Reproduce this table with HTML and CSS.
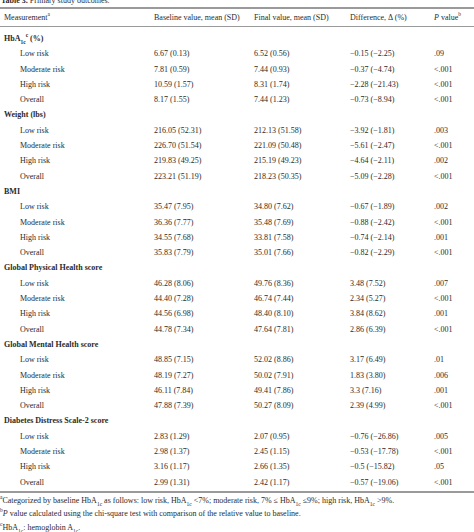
FILE: index.html
```html
<!DOCTYPE html>
<html>
<head>
<meta charset="utf-8">
<link rel="stylesheet" href="styles.css">
</head>
<body>
<div class="caption"><b>Table 3.</b> Primary study outcomes.</div>
<table class="tbl">
<colgroup><col class="c1"><col class="c2"><col class="c3"><col class="c4"><col class="c5"></colgroup>
<thead>
<tr><th>Measurement<sup>a</sup></th><th>Baseline value, mean (SD)</th><th>Final value, mean (SD)</th><th>Difference, Δ (%)</th><th><i>P</i> value<sup>b</sup></th></tr>
</thead>
<tbody>
<tr class="sec first"><td colspan="5">HbA<sub>1c</sub><sup>c</sup> (%)</td></tr>
<tr><td>Low risk</td><td>6.67 (0.13)</td><td>6.52 (0.56)</td><td>−0.15 (−2.25)</td><td>.09</td></tr>
<tr><td>Moderate risk</td><td>7.81 (0.59)</td><td>7.44 (0.93)</td><td>−0.37 (−4.74)</td><td>&lt;.001</td></tr>
<tr><td>High risk</td><td>10.59 (1.57)</td><td>8.31 (1.74)</td><td>−2.28 (−21.43)</td><td>&lt;.001</td></tr>
<tr><td>Overall</td><td>8.17 (1.55)</td><td>7.44 (1.23)</td><td>−0.73 (−8.94)</td><td>&lt;.001</td></tr>
<tr class="sec"><td colspan="5">Weight (lbs)</td></tr>
<tr><td>Low risk</td><td>216.05 (52.31)</td><td>212.13 (51.58)</td><td>−3.92 (−1.81)</td><td>.003</td></tr>
<tr><td>Moderate risk</td><td>226.70 (51.54)</td><td>221.09 (50.48)</td><td>−5.61 (−2.47)</td><td>&lt;.001</td></tr>
<tr><td>High risk</td><td>219.83 (49.25)</td><td>215.19 (49.23)</td><td>−4.64 (−2.11)</td><td>.002</td></tr>
<tr><td>Overall</td><td>223.21 (51.19)</td><td>218.23 (50.35)</td><td>−5.09 (−2.28)</td><td>&lt;.001</td></tr>
<tr class="sec"><td colspan="5">BMI</td></tr>
<tr><td>Low risk</td><td>35.47 (7.95)</td><td>34.80 (7.62)</td><td>−0.67 (−1.89)</td><td>.002</td></tr>
<tr><td>Moderate risk</td><td>36.36 (7.77)</td><td>35.48 (7.69)</td><td>−0.88 (−2.42)</td><td>&lt;.001</td></tr>
<tr><td>High risk</td><td>34.55 (7.68)</td><td>33.81 (7.58)</td><td>−0.74 (−2.14)</td><td>.001</td></tr>
<tr><td>Overall</td><td>35.83 (7.79)</td><td>35.01 (7.66)</td><td>−0.82 (−2.29)</td><td>&lt;.001</td></tr>
<tr class="sec"><td colspan="5">Global Physical Health score</td></tr>
<tr><td>Low risk</td><td>46.28 (8.06)</td><td>49.76 (8.36)</td><td>3.48 (7.52)</td><td>.007</td></tr>
<tr><td>Moderate risk</td><td>44.40 (7.28)</td><td>46.74 (7.44)</td><td>2.34 (5.27)</td><td>&lt;.001</td></tr>
<tr><td>High risk</td><td>44.56 (6.98)</td><td>48.40 (8.10)</td><td>3.84 (8.62)</td><td>.001</td></tr>
<tr><td>Overall</td><td>44.78 (7.34)</td><td>47.64 (7.81)</td><td>2.86 (6.39)</td><td>&lt;.001</td></tr>
<tr class="sec"><td colspan="5">Global Mental Health score</td></tr>
<tr><td>Low risk</td><td>48.85 (7.15)</td><td>52.02 (8.86)</td><td>3.17 (6.49)</td><td>.01</td></tr>
<tr><td>Moderate risk</td><td>48.19 (7.27)</td><td>50.02 (7.91)</td><td>1.83 (3.80)</td><td>.006</td></tr>
<tr><td>High risk</td><td>46.11 (7.84)</td><td>49.41 (7.86)</td><td>3.3 (7.16)</td><td>.001</td></tr>
<tr><td>Overall</td><td>47.88 (7.39)</td><td>50.27 (8.09)</td><td>2.39 (4.99)</td><td>&lt;.001</td></tr>
<tr class="sec"><td colspan="5">Diabetes Distress Scale-2 score</td></tr>
<tr><td>Low risk</td><td>2.83 (1.29)</td><td>2.07 (0.95)</td><td>−0.76 (−26.86)</td><td>.005</td></tr>
<tr><td>Moderate risk</td><td>2.98 (1.37)</td><td>2.45 (1.15)</td><td>−0.53 (−17.78)</td><td>&lt;.001</td></tr>
<tr><td>High risk</td><td>3.16 (1.17)</td><td>2.66 (1.35)</td><td>−0.5 (−15.82)</td><td>.05</td></tr>
<tr class="last"><td>Overall</td><td>2.99 (1.31)</td><td>2.42 (1.17)</td><td>−0.57 (−19.06)</td><td>&lt;.001</td></tr>
</tbody>
</table>
<div class="notes">
<p><sup>a</sup>Categorized by baseline HbA<sub>1c</sub> as follows: low risk, HbA<sub>1c</sub> &lt;7%; moderate risk, 7% ≤ HbA<sub>1c</sub> ≤9%; high risk, HbA<sub>1c</sub> &gt;9%.</p>
<p><sup>b</sup><i>P</i> value calculated using the chi-square test with comparison of the relative value to baseline.</p>
<p><sup>c</sup>HbA<sub>1c</sub>: hemoglobin A<sub>1c</sub>.</p>
</div>
</body>
</html>
```
FILE: styles.css
```css
html, body {
  margin: 0;
  padding: 0;
  background: #fff;
}
body {
  font-family: "Liberation Serif", "Times New Roman", serif;
  font-size: 8px;
  color: #2b2b2b;
  width: 474px;
  overflow: hidden;
}
.caption {
  margin-top: -4px;
  height: 11px;
  line-height: 10px;
  padding-left: 1px;
  font-size: 8px;
}
.tbl {
  width: 474px;
  table-layout: fixed;
  border-collapse: collapse;
  border-top: 2px solid #9a9a9a;
  border-bottom: 2px solid #9a9a9a;
}
.c1 { width: 154px; }
.c2 { width: 100px; }
.c3 { width: 96px; }
.c4 { width: 84px; }
.c5 { width: 40px; }
.tbl th {
  font-weight: normal;
  text-align: left;
  height: 17px;
  padding: 0;
  line-height: 17px;
  border-bottom: 1px solid #9a9a9a;
  white-space: nowrap;
}
.tbl th:first-child { padding-left: 4px; }
.tbl td {
  padding: 0;
  height: 15.3px;
  line-height: 15.3px;
  white-space: nowrap;
  vertical-align: middle;
}
.tbl td:first-child { padding-left: 20px; }
.tbl tr.sec td {
  padding-left: 4px;
  font-weight: bold;
}
.tbl tr.first td { padding-top: 4px; }
.tbl tr.last td { padding-bottom: 1px; }
sup, sub {
  font-size: 5.5px;
  line-height: 0;
}
.notes {
  padding-top: 1px;
}
.notes p {
  margin: 0;
  line-height: 13.5px;
  font-size: 8px;
  white-space: nowrap;
}
```
